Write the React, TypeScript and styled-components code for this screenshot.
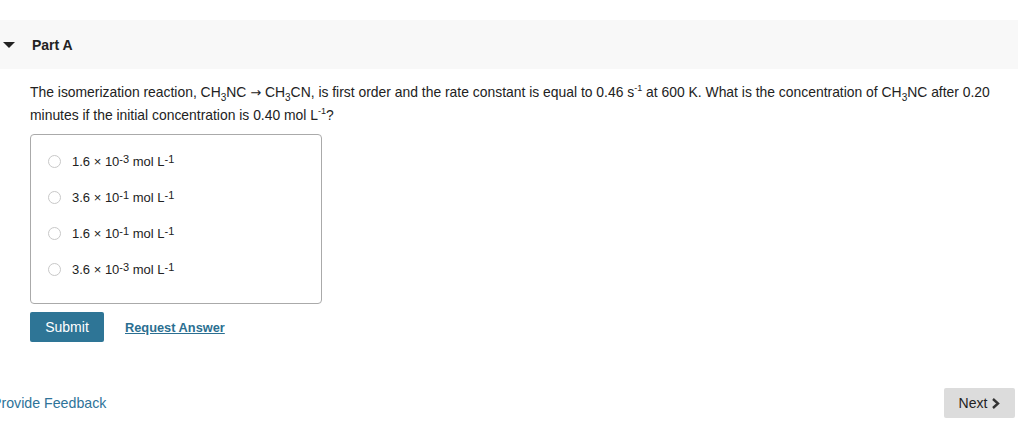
import {FC} from "react";
import styled, {createGlobalStyle} from "styled-components";

const GlobalStyle = createGlobalStyle`
  html, body {
    margin: 0;
    padding: 0;
    background: #fff;
    font-family: "Liberation Sans", Arial, sans-serif;
    color: #222;
  }
`;

const Page = styled.div`
  width: 1024px;
  height: 438px;
  overflow: hidden;
  padding-top: 20px;
  box-sizing: border-box;
`;

const PartHeader = styled.div`
  width: 1018px;
  height: 49px;
  background: #f8f8f8;
  display: flex;
  align-items: center;
  gap: 17px;
  padding-left: 3px;
  box-sizing: border-box;
`;

const Caret = styled.span`
  width: 0;
  height: 0;
  border-left: 6px solid transparent;
  border-right: 6px solid transparent;
  border-top: 6px solid #222;
`;

const PartTitle = styled.h2`
  margin: 0;
  font-size: 14px;
  font-weight: bold;
  color: #222;
`;

const Body = styled.div`
  padding: 12px 0 0 30px;
`;

const Question = styled.p`
  margin: 0;
  width: 985px;
  font-size: 13.9px;
  line-height: 22px;
  color: #222;
`;

const Arrow = styled.span`
  font-family: "DejaVu Sans", sans-serif;
  font-size: 13px;
`;

const Options = styled.div`
  margin-top: 8px;
  width: 292px;
  height: 170px;
  box-sizing: border-box;
  border: 1px solid #aaa;
  border-radius: 4px;
  padding: 16px 0 0 17px;
  display: flex;
  flex-direction: column;
  gap: 16px;
`;

const OptionRow = styled.label`
  display: flex;
  align-items: center;
  gap: 11px;
  height: 20px;
  font-size: 13px;
  color: #222;
`;

const Radio = styled.span`
  width: 13px;
  height: 13px;
  border-radius: 50%;
  border: 1px solid #c8c8c8;
  box-sizing: border-box;
  background: #fff;
`;

const Raised = styled.span`
  font-size: 11px;
  vertical-align: 3px;
`;

const Sup = styled.sup`
  font-size: 9px;
  line-height: 0;
`;

const Sub = styled.sub`
  font-size: 10px;
  line-height: 0;
`;

const Actions = styled.div`
  margin-top: 8px;
  display: flex;
  align-items: center;
  gap: 21px;
`;

const SubmitButton = styled.button`
  width: 74px;
  height: 30px;
  border: none;
  border-radius: 2px;
  background: #2e7596;
  color: #fff;
  font-family: inherit;
  font-size: 14px;
  padding: 0;
`;

const RequestLink = styled.a`
  font-size: 12.8px;
  font-weight: bold;
  color: #2b6f91;
  text-decoration: underline;
`;

const Footer = styled.div`
  margin-top: 46px;
  display: flex;
  align-items: center;
  justify-content: space-between;
  width: 1015px;
`;

const FeedbackLink = styled.a`
  margin-left: -8px;
  font-size: 14.2px;
  color: #2e7399;
`;

const NextButton = styled.button`
  width: 71px;
  height: 30px;
  border: none;
  border-radius: 2px;
  background: #dcdcdc;
  color: #222;
  font-family: inherit;
  font-size: 14px;
  display: flex;
  align-items: center;
  justify-content: center;
  gap: 4px;
  padding: 0;
`;

interface IAnswer {
    mantissa: string
    exponent: string
}

const answers: IAnswer[] = [
    {mantissa: "1.6", exponent: "-3"},
    {mantissa: "3.6", exponent: "-1"},
    {mantissa: "1.6", exponent: "-1"},
    {mantissa: "3.6", exponent: "-3"},
];

const App: FC = () => {
    return (
        <>
            <GlobalStyle/>
            <Page>
                <PartHeader>
                    <Caret/>
                    <PartTitle>Part A</PartTitle>
                </PartHeader>
                <Body>
                    <Question>
                        The isomerization reaction, CH<Sub>3</Sub>NC <Arrow>&rarr;</Arrow> CH<Sub>3</Sub>CN, is first order
                        and the rate constant is equal to 0.46 s<Sup>-1</Sup> at 600 K. What is the concentration
                        of CH<Sub>3</Sub>NC after 0.20 minutes if the initial concentration is 0.40
                        mol L<Sup>-1</Sup>?
                    </Question>
                    <Options>
                        {answers.map((a, i) => (
                            <OptionRow key={i}>
                                <Radio/>
                                <span>
                                    {a.mantissa} &times; 10<Raised>{a.exponent}</Raised> mol L<Raised>-1</Raised>
                                </span>
                            </OptionRow>
                        ))}
                    </Options>
                    <Actions>
                        <SubmitButton>Submit</SubmitButton>
                        <RequestLink>Request Answer</RequestLink>
                    </Actions>
                </Body>
                <Footer>
                    <FeedbackLink>Provide Feedback</FeedbackLink>
                    <NextButton>
                        Next
                        <svg width="9" height="11" viewBox="0 0 9 11">
                            <path d="M2 1 L7 5.5 L2 10" fill="none" stroke="#333" strokeWidth="2.4"/>
                        </svg>
                    </NextButton>
                </Footer>
            </Page>
        </>
    );
};

export default App;
